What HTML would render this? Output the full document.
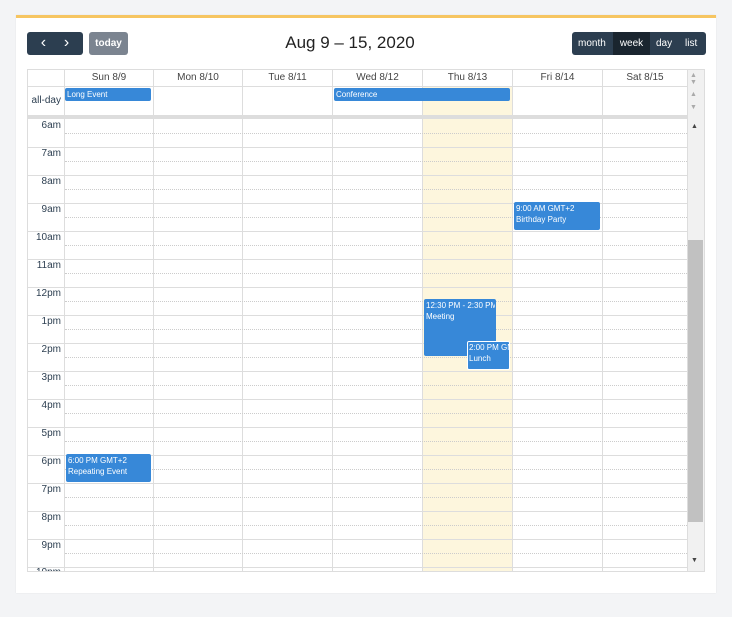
<!DOCTYPE html><html><head><style>
*{margin:0;padding:0;box-sizing:border-box}
body{width:732px;height:617px;background:#f3f4f6;font-family:"Liberation Sans",sans-serif;position:relative;overflow:hidden;color:#2c3e50}
.card{position:absolute;left:16px;top:15px;width:700px;height:578px;background:#fff;border-top:3px solid #f6c561;box-shadow:0 0 1px #ddd}
.a{position:absolute}
.btn{position:absolute;top:32px;height:23px;color:#fff;font-size:11px;line-height:23px;text-align:center;border-radius:3px}
.hl{position:absolute;left:28px;width:659px;height:1px;background:#ddd}
.dl{position:absolute;left:65px;width:622px;height:0;border-top:1px dotted #ccc}
.vl{position:absolute;width:1px;background:#ddd}
.lab{position:absolute;left:28px;width:33px;text-align:right;font-size:10px;color:#2c3e50;margin-top:1px}
.th{position:absolute;top:70px;height:16px;font-size:10px;text-align:center;line-height:16px;color:#444}
.ev{position:absolute;background:#3788d8;border:1px solid #3788d8;border-radius:2px;color:#fff;font-size:8px;line-height:11px;padding:0 1px;overflow:hidden;white-space:nowrap}
</style></head><body>
<div class="card"></div>
<div class="btn" style="left:27px;width:56px;background:#2c3e50;font-size:16px;line-height:22px">&#8249;&nbsp;&nbsp;&nbsp;&nbsp;&#8250;</div>
<div class="btn" style="left:89px;width:39px;background:#7b8490;font-weight:bold;font-size:10px">today</div>
<div class="a" style="left:230px;top:33px;width:240px;text-align:center;font-size:17px;color:#222">Aug 9 – 15, 2020</div>
<div class="btn" style="left:572px;width:134px;background:#2c3e50;text-align:left;font-size:10px">
<span style="position:absolute;left:6px">month</span><span style="position:absolute;left:41px;width:37px;height:23px;background:#1a252f;text-align:center">week</span><span style="position:absolute;left:84px">day</span><span style="position:absolute;left:113px">list</span></div>
<div class="a" style="left:27px;top:69px;width:678px;height:503px;border:1px solid #ddd"></div>
<div class="a" style="left:422px;top:86px;width:90px;height:29px;background:#fdf6dd"></div>
<div class="a" style="left:422px;top:119px;width:90px;height:452px;background:#fdf6dd"></div>
<div class="hl" style="top:86px"></div>
<div class="a" style="left:28px;top:115px;width:676px;height:4px;background:#ddd"></div>
<div class="a" style="left:687px;top:70px;width:17px;height:501px;background:#f1f1f1"></div>
<div class="a" style="left:688px;top:240px;width:15px;height:282px;background:#c1c1c1"></div>
<div class="a" style="left:690px;top:72px;font-size:7px;color:#aaa;line-height:7px">▲<br>▼</div>
<div class="a" style="left:690px;top:91px;font-size:7px;color:#aaa">▲</div>
<div class="a" style="left:690px;top:104px;font-size:7px;color:#aaa">▼</div>
<div class="a" style="left:691px;top:123px;font-size:7px;color:#444">▲</div>
<div class="a" style="left:691px;top:557px;font-size:7px;color:#444">▼</div>
<div class="vl" style="left:64px;top:70px;height:501px"></div>
<div class="vl" style="left:153px;top:70px;height:501px"></div>
<div class="vl" style="left:242px;top:70px;height:501px"></div>
<div class="vl" style="left:332px;top:70px;height:501px"></div>
<div class="vl" style="left:422px;top:70px;height:501px"></div>
<div class="vl" style="left:512px;top:70px;height:501px"></div>
<div class="vl" style="left:602px;top:70px;height:501px"></div>
<div class="vl" style="left:687px;top:70px;height:501px"></div>
<div class="th" style="left:65px;width:88px">Sun 8/9</div>
<div class="th" style="left:154px;width:88px">Mon 8/10</div>
<div class="th" style="left:243px;width:89px">Tue 8/11</div>
<div class="th" style="left:333px;width:89px">Wed 8/12</div>
<div class="th" style="left:423px;width:89px">Thu 8/13</div>
<div class="th" style="left:513px;width:89px">Fri 8/14</div>
<div class="th" style="left:603px;width:84px">Sat 8/15</div>
<div class="lab" style="top:94px">all-day</div>
<div class="hl" style="top:147px"></div><div class="hl" style="top:175px"></div><div class="hl" style="top:203px"></div><div class="hl" style="top:231px"></div><div class="hl" style="top:259px"></div><div class="hl" style="top:287px"></div><div class="hl" style="top:315px"></div><div class="hl" style="top:343px"></div><div class="hl" style="top:371px"></div><div class="hl" style="top:399px"></div><div class="hl" style="top:427px"></div><div class="hl" style="top:455px"></div><div class="hl" style="top:483px"></div><div class="hl" style="top:511px"></div><div class="hl" style="top:539px"></div><div class="hl" style="top:567px"></div>
<div class="dl" style="top:133px"></div><div class="dl" style="top:161px"></div><div class="dl" style="top:189px"></div><div class="dl" style="top:217px"></div><div class="dl" style="top:245px"></div><div class="dl" style="top:273px"></div><div class="dl" style="top:301px"></div><div class="dl" style="top:329px"></div><div class="dl" style="top:357px"></div><div class="dl" style="top:385px"></div><div class="dl" style="top:413px"></div><div class="dl" style="top:441px"></div><div class="dl" style="top:469px"></div><div class="dl" style="top:497px"></div><div class="dl" style="top:525px"></div><div class="dl" style="top:553px"></div>
<div class="lab" style="top:119px">6am</div><div class="lab" style="top:147px">7am</div><div class="lab" style="top:175px">8am</div><div class="lab" style="top:203px">9am</div><div class="lab" style="top:231px">10am</div><div class="lab" style="top:259px">11am</div><div class="lab" style="top:287px">12pm</div><div class="lab" style="top:315px">1pm</div><div class="lab" style="top:343px">2pm</div><div class="lab" style="top:371px">3pm</div><div class="lab" style="top:399px">4pm</div><div class="lab" style="top:427px">5pm</div><div class="lab" style="top:455px">6pm</div><div class="lab" style="top:483px">7pm</div><div class="lab" style="top:511px">8pm</div><div class="lab" style="top:539px">9pm</div>
<div class="a" style="left:28px;top:566px;width:36px;height:5px;overflow:hidden"><div class="lab" style="left:0;top:0">10pm</div></div>
<div class="ev" style="left:65px;top:88px;width:86px;height:13px">Long Event</div>
<div class="ev" style="left:334px;top:88px;width:176px;height:13px">Conference</div>
<div class="ev" style="left:514px;top:202px;width:86px;height:28px">9:00 AM GMT+2<br>Birthday Party</div>
<div class="ev" style="left:424px;top:299px;width:72px;height:57px">12:30 PM - 2:30 PM G<br>Meeting</div>
<div class="ev" style="left:467px;top:341px;width:43px;height:29px;border-color:#fff">2:00 PM GMT<br>Lunch</div>
<div class="ev" style="left:66px;top:454px;width:85px;height:28px">6:00 PM GMT+2<br>Repeating Event</div>
</body></html>
